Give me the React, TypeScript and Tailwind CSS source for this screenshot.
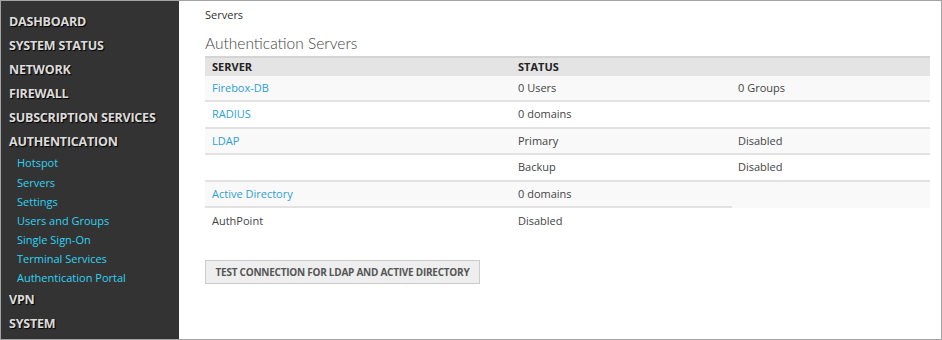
import React from 'react';

const topMenu = ['DASHBOARD', 'SYSTEM STATUS', 'NETWORK', 'FIREWALL', 'SUBSCRIPTION SERVICES', 'AUTHENTICATION'];
const subMenu = ['Hotspot', 'Servers', 'Settings', 'Users and Groups', 'Single Sign-On', 'Terminal Services', 'Authentication Portal'];
const bottomMenu = ['VPN', 'SYSTEM'];

type Row = { server: string; link: boolean; status: string; extra: string; bg: string };

const rows: Row[] = [
  { server: 'Firebox-DB', link: true, status: '0 Users', extra: '0 Groups', bg: 'bg-[#f9f9f9]' },
  { server: 'RADIUS', link: true, status: '0 domains', extra: '', bg: 'bg-white' },
  { server: 'LDAP', link: true, status: 'Primary', extra: 'Disabled', bg: 'bg-[#f9f9f9]' },
  { server: '', link: false, status: 'Backup', extra: 'Disabled', bg: 'bg-white' },
  { server: 'Active Directory', link: true, status: '0 domains', extra: '', bg: 'bg-[#f9f9f9]' },
  { server: 'AuthPoint', link: false, status: 'Disabled', extra: '', bg: 'bg-white' },
];

function NavTop({ label }: { label: string }) {
  return (
    <div className="h-6 flex items-center pl-2 text-[12.5px] font-bold text-[#dcdcdc] [text-shadow:1px_1px_1px_#000] tracking-[-0.2px]">
      {label}
    </div>
  );
}

export default function App() {
  return (
    <div className="w-[942px] h-[340px] flex border border-[#a3a3a3] bg-white overflow-hidden" style={{ fontFamily: '"Open Sans", sans-serif' }}>
      <div className="w-[178px] shrink-0 bg-[#333333] pt-[9px]">
        {topMenu.map(m => <NavTop key={m} label={m} />)}
        <div>
          {subMenu.map(s => (
            <div key={s} className="h-[19.2px] flex items-center pl-4 text-[11px] text-[#2fd3f5]">{s}</div>
          ))}
        </div>
        {bottomMenu.map(m => <NavTop key={m} label={m} />)}
      </div>

      <div className="flex-1 pl-[26px] pr-[9px] pt-[6px] text-[#444]">
        <div className="text-[11px] text-[#333] h-[15px] leading-[15px]">Servers</div>
        <h1 className="mt-[11px] text-[15.5px] leading-[20px] text-[#444] font-light" style={{ fontFamily: 'Lato, sans-serif' }}>Authentication Servers</h1>
        <div className="mt-[3px] w-[725px] text-[11px]">
          <div className="flex h-[20px] bg-[#e4e4e4] border-t-2 border-[#d4d4d4] font-bold text-[#222] items-center">
            <div className="w-[307px] pl-[7px]">SERVER</div>
            <div className="w-[220px] pl-[6px]">STATUS</div>
            <div className="flex-1" />
          </div>
          {rows.map((r, i) => (
            <div key={i} className={`flex h-[26.4px] ${r.bg}`}>
              <div className={`w-[307px] pl-[7px] flex items-center ${i < 5 ? 'border-b-2 border-[#e2e2e2]' : ''} ${r.link ? 'text-[#2d9fd3]' : 'text-[#444]'}`}>{r.server}</div>
              <div className={`w-[220px] pl-[6px] flex items-center ${i < 5 ? 'border-b-2 border-[#e2e2e2]' : ''}`}>{r.status}</div>
              <div className={`flex-1 pl-[6px] flex items-center ${i < 4 ? 'border-b-2 border-[#e2e2e2]' : ''}`}>{r.extra}</div>
            </div>
          ))}
        </div>
        <button className="mt-[26px] h-[24px] w-[275px] bg-[#eeeeee] border border-[#cccccc] text-[10px] font-bold text-[#555] whitespace-nowrap tracking-[-0.25px]">
          TEST CONNECTION FOR LDAP AND ACTIVE DIRECTORY
        </button>
      </div>
    </div>
  );
}
